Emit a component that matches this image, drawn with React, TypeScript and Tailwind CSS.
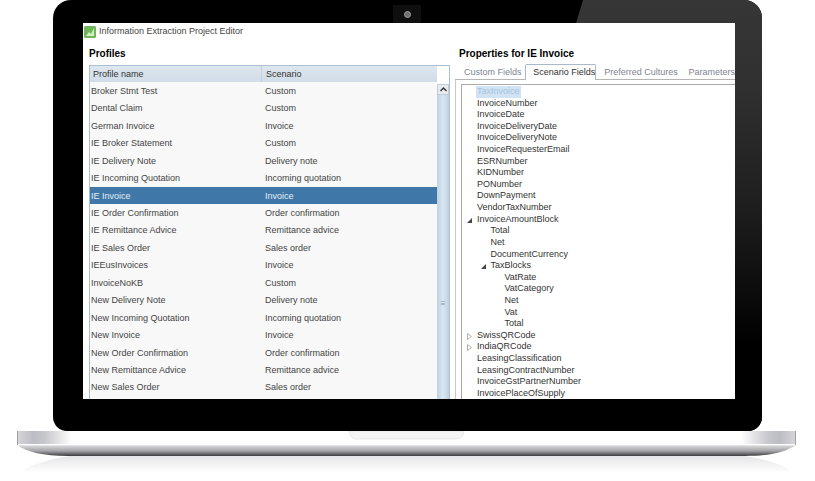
import React from "react";

const profiles: [string, string][] = [
  ["Broker Stmt Test", "Custom"],
  ["Dental Claim", "Custom"],
  ["German Invoice", "Invoice"],
  ["IE Broker Statement", "Custom"],
  ["IE Delivery Note", "Delivery note"],
  ["IE Incoming Quotation", "Incoming quotation"],
  ["IE Invoice", "Invoice"],
  ["IE Order Confirmation", "Order confirmation"],
  ["IE Remittance Advice", "Remittance advice"],
  ["IE Sales Order", "Sales order"],
  ["IEEusInvoices", "Invoice"],
  ["InvoiceNoKB", "Custom"],
  ["New Delivery Note", "Delivery note"],
  ["New Incoming Quotation", "Incoming quotation"],
  ["New Invoice", "Invoice"],
  ["New Order Confirmation", "Order confirmation"],
  ["New Remittance Advice", "Remittance advice"],
  ["New Sales Order", "Sales order"],
];

const tree: [string, number, ("open" | "closed")?][] = [
  ["TaxInvoice", 0],
  ["InvoiceNumber", 0],
  ["InvoiceDate", 0],
  ["InvoiceDeliveryDate", 0],
  ["InvoiceDeliveryNote", 0],
  ["InvoiceRequesterEmail", 0],
  ["ESRNumber", 0],
  ["KIDNumber", 0],
  ["PONumber", 0],
  ["DownPayment", 0],
  ["VendorTaxNumber", 0],
  ["InvoiceAmountBlock", 0, "open"],
  ["Total", 1],
  ["Net", 1],
  ["DocumentCurrency", 1],
  ["TaxBlocks", 1, "open"],
  ["VatRate", 2],
  ["VatCategory", 2],
  ["Net", 2],
  ["Vat", 2],
  ["Total", 2],
  ["SwissQRCode", 0, "closed"],
  ["IndiaQRCode", 0, "closed"],
  ["LeasingClassification", 0],
  ["LeasingContractNumber", 0],
  ["InvoiceGstPartnerNumber", 0],
  ["InvoicePlaceOfSupply", 0],
];

const indent = ["pl-0", "pl-[13.5px]", "pl-[27.5px]"];

function Caret({ kind }: { kind: "open" | "closed" }) {
  return (
    <svg width="7" height="7" viewBox="0 0 7 7" className="absolute left-[-11px] top-[3px]">
      {kind === "open" ? (
        <path d="M6 1V6H1Z" fill="#444" />
      ) : (
        <path d="M1.5 .5L5.5 3.5L1.5 6.5Z" fill="#fff" stroke="#b0b0b0" />
      )}
    </svg>
  );
}

function LaptopBase() {
  return (
    <svg width="815" height="50" viewBox="0 0 815 50" className="block">
      <defs>
        <linearGradient id="body" x1="0" y1="0" x2="0" y2="1">
          <stop offset="0" stopColor="#ffffff" />
          <stop offset="0.54" stopColor="#ffffff" />
          <stop offset="0.6" stopColor="#d4d4d6" />
          <stop offset="0.8" stopColor="#a4a4a8" />
          <stop offset="0.92" stopColor="#66666a" />
          <stop offset="1" stopColor="#3a3a3c" />
        </linearGradient>
        <linearGradient id="capL" x1="0" y1="0" x2="1" y2="0">
          <stop offset="0" stopColor="#d6d6da" />
          <stop offset="0.3" stopColor="#bcbcc4" />
          <stop offset="0.5" stopColor="#c6c6cc" />
          <stop offset="1" stopColor="#ffffff" />
        </linearGradient>
        <linearGradient id="capR" x1="1" y1="0" x2="0" y2="0">
          <stop offset="0" stopColor="#d6d6da" />
          <stop offset="0.3" stopColor="#bcbcc4" />
          <stop offset="0.5" stopColor="#c6c6cc" />
          <stop offset="1" stopColor="#ffffff" />
        </linearGradient>
        <linearGradient id="reflect" x1="0" y1="0" x2="0" y2="1">
          <stop offset="0" stopColor="#e6e6e8" />
          <stop offset="1" stopColor="#ffffff" />
        </linearGradient>
      </defs>
      <path d="M70 25 H745 C 770 29 785 35 794 42 H19 C 28 35 45 29 70 25Z" fill="url(#reflect)" />
      <path d="M17 0 H796 V14 C 786 21 770 25 745 25 H68 C 43 25 27 21 17 14Z" fill="url(#body)" />
      <rect x="17" y="0" width="55" height="13" fill="url(#capL)" />
      <rect x="741" y="0" width="55" height="13" fill="url(#capR)" />
      <rect x="17" y="0" width="1" height="14" fill="#a0a0a4" />
      <rect x="795" y="0" width="1" height="14" fill="#a0a0a4" />
      <path d="M349 0 H464 C 463 6 460 8 456 8 H357 C 353 8 350 6 349 0Z" fill="#f4f4f5" stroke="#dddde0" strokeWidth="0.6" />
    </svg>
  );
}

export default function App() {
  return (
    <div className="relative w-[815px] h-[481px] bg-white overflow-hidden font-['Liberation_Sans',Arial,sans-serif]">
      {/* lid */}
      <div className="relative ml-[53px] w-[709px] h-[431px] bg-black rounded-b-[14px] rounded-t-[18px] overflow-hidden pt-[23px] pl-[30px]">
        <svg className="absolute inset-0" width="709" height="431" viewBox="0 0 709 431">
          <defs>
            <linearGradient id="glare" x1="0" y1="0" x2="0" y2="1">
              <stop offset="0" stopColor="#363636" />
              <stop offset="0.2" stopColor="#303030" />
              <stop offset="0.48" stopColor="#1e1e1e" />
              <stop offset="0.8" stopColor="#000000" />
            </linearGradient>
          </defs>
          <path d="M530 0H709V431H400Z" fill="url(#glare)" />
        </svg>
        <div className="absolute left-[340px] top-[5px] w-[28px] h-[18px] bg-[#0f0f0f] flex items-center justify-center">
          <div className="w-[7px] h-[7px] rounded-full bg-[#6f6f6f] border border-[#a0a0a0]" />
        </div>
        {/* screen */}
        <div className="relative w-[652px] h-[376px] bg-white overflow-hidden flex flex-col">
          <div className="h-[18px] flex items-center pl-[1px] gap-[3px] text-[9px] text-[#444] shrink-0">
            <svg width="12" height="12" viewBox="0 0 12 12">
              <rect width="12" height="12" rx="1.5" fill="#6fb55a" />
              <path d="M2 10L5 6L7 8L10 2V10Z" fill="#d5efc4" />
            </svg>
            <span>Information Extraction Project Editor</span>
          </div>
          <div className="flex flex-1 min-h-0">
            {/* profiles */}
            <div className="w-[372px] pl-[6px] shrink-0 flex flex-col">
              <h2 className="h-[24px] pt-[4px] text-[10px] font-bold text-black leading-[18px]">Profiles</h2>
              <div className="w-[361px] flex-1 min-h-0 border-l border-t border-r border-[#a9bfd4] flex bg-[#f8f8f8]">
                <div className="w-[347px] shrink-0 flex flex-col">
                  <div className="h-[16px] flex bg-gradient-to-b from-[#dfe7ef] to-[#d0dce8] text-[9px] text-[#333] leading-[16px] shrink-0">
                    <div className="w-[172px] pl-[3px] border-r border-[#c4d0dc]">Profile name</div>
                    <div className="pl-[4px]">Scenario</div>
                  </div>
                  {profiles.map(([name, scenario]) => {
                    const selected = name === "IE Invoice";
                    return (
                      <div
                        key={name}
                        className={`h-[17.45px] flex items-center pl-[1px] pt-[2px] text-[9px] shrink-0 ${
                          selected ? "bg-[#3f78a8] text-[#e4eef6]" : "text-[#444]"
                        }`}
                      >
                        <div className="w-[174px]">{name}</div>
                        <div>{scenario}</div>
                      </div>
                    );
                  })}
                </div>
                <div className="flex-1 bg-white flex flex-col items-center pt-[18px]">
                  <div className="w-[12px] flex-1 flex flex-col bg-gradient-to-r from-[#bcd1e3] via-[#dbe6f0] to-[#bcd1e3]">
                    <div className="h-[11px] bg-[#e8ebee] flex items-center justify-center border border-[#c0ccd6]">
                      <svg width="7" height="5" viewBox="0 0 7 5">
                        <path d="M.5 4L3.5 1L6.5 4" stroke="#333" strokeWidth="1.4" fill="none" />
                      </svg>
                    </div>
                    <div className="mt-[205px] text-center leading-none text-[#7f96aa] text-[8px]">≡</div>
                  </div>
                </div>
              </div>
            </div>
            {/* properties */}
            <div className="flex-1 min-w-0 flex flex-col">
              <h2 className="h-[24px] pl-[4px] pt-[4px] text-[10px] font-bold text-black leading-[18px] whitespace-nowrap">Properties for IE Invoice</h2>
              <div className="h-[15px] flex items-end border-b border-[#b5b5b5] text-[9px] text-[#7d8590] whitespace-nowrap shrink-0 overflow-x-clip">
                <div className="w-[73px] pl-[9px] leading-[15px] self-start">Custom Fields</div>
                <div className="w-[74px] h-[16px] -mb-[1px] pl-[7px] border border-b-0 border-[#a8bac8] bg-white text-[#333] leading-[15px] rounded-t-[2px]">Scenario Fields</div>
                <div className="w-[96px] pl-[8px] leading-[15px] self-start">Preferred Cultures</div>
                <div className="leading-[15px] self-start">Parameters</div>
              </div>
              <div className="flex-1 min-h-0 border-l border-[#c8c8c8] pl-[5px] pt-[4px] flex flex-col">
                <div className="flex-1 min-h-0 border-l border-t border-[#aaaaaa] pl-[15px] pt-[1px] overflow-hidden">
                  {tree.map(([label, level, caret], i) => (
                    <div
                      key={i}
                      className={`h-[11.62px] leading-[11.62px] text-[9px] text-[#333] whitespace-nowrap ${indent[level]}`}
                    >
                      <span className={`relative inline-block ${i === 0 ? "bg-[#cfe3f5] text-[#a9c4da] px-[1px] -ml-[1px]" : ""}`}>
                        {caret && <Caret kind={caret} />}
                        {label}
                      </span>
                    </div>
                  ))}
                </div>
              </div>
            </div>
          </div>
        </div>
      </div>
      <LaptopBase />
    </div>
  );
}
